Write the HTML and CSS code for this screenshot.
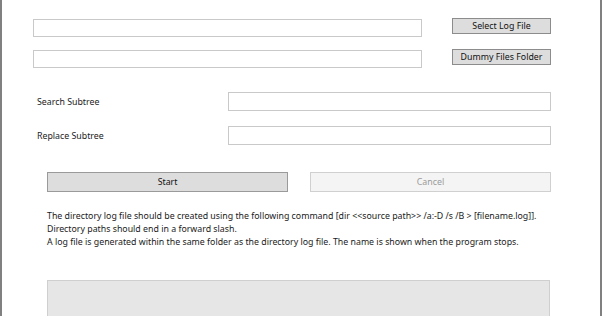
FILE: index.html
```html
<!DOCTYPE html>
<html>
<head>
<meta charset="utf-8">
<link rel="stylesheet" href="styles.css">
</head>
<body>
<div class="window">
  <div class="file-row first">
    <div class="textbox path"></div>
    <div class="btn small">Select Log File</div>
  </div>
  <div class="file-row">
    <div class="textbox path"></div>
    <div class="btn small">Dummy Files Folder</div>
  </div>
  <div class="field-row search">
    <div class="label">Search Subtree</div>
    <div class="textbox field"></div>
  </div>
  <div class="field-row replace">
    <div class="label">Replace Subtree</div>
    <div class="textbox field"></div>
  </div>
  <div class="action-row">
    <div class="btn wide start">Start</div>
    <div class="btn wide disabled">Cancel</div>
  </div>
  <div class="info">
    <div>The directory log file should be created using the following command [dir &lt;&lt;source path&gt;&gt; /a:-D /s /B &gt; [filename.log]].</div>
    <div>Directory paths should end in a forward slash.</div>
    <div>A log file is generated within the same folder as the directory log file. The name is shown when the program stops.</div>
  </div>
  <div class="output"></div>
</div>
</body>
</html>
```

FILE: styles.css
```css
html, body {
  margin: 0;
  padding: 0;
  background: #ffffff;
}
.window {
  width: 598px;
  height: 316px;
  border-left: 2px solid #808080;
  border-right: 2px solid #808080;
  background: #ffffff;
  font-family: "Noto Sans", "Open Sans", sans-serif;
  font-size: 8.8px;
  color: #1a1a1a;
  display: flex;
  flex-direction: column;
  overflow: hidden;
}
.file-row {
  display: flex;
  align-items: flex-start;
  margin-top: 12px;
  padding-left: 31px;
}
.file-row.first {
  margin-top: 18px;
}
.textbox {
  box-sizing: border-box;
  border: 1px solid #c9c9c9;
  background: #ffffff;
}
.textbox.path {
  width: 389px;
  height: 18px;
  margin-top: 1px;
}
.btn {
  box-sizing: border-box;
  display: flex;
  align-items: center;
  justify-content: center;
  background: #dddddd;
  border: 1px solid #8c8c8c;
  color: #111;
}
.btn.small {
  width: 99px;
  height: 16px;
  margin-left: 30px;
}
.field-row {
  display: flex;
  align-items: center;
  padding-left: 35px;
}
.field-row.search {
  margin-top: 24px;
}
.field-row.replace {
  margin-top: 15px;
}
.label {
  width: 191px;
}
.textbox.field {
  width: 323px;
  height: 19px;
}
.action-row {
  display: flex;
  margin-top: 27px;
  padding-left: 45px;
  gap: 22px;
}
.btn.wide {
  width: 241px;
  height: 20px;
}
.btn.start {
  border-color: #9a9a9a;
}
.btn.disabled {
  background: #f4f4f4;
  border-color: #d0d0d0;
  color: #9a9a9a;
}
.info {
  margin-top: 18px;
  padding-left: 45px;
  line-height: 13px;
}
.output {
  margin-top: 31px;
  margin-left: 45px;
  width: 503px;
  flex: 1;
  box-sizing: border-box;
  background: #e6e6e6;
  border: 1px solid #cfcfcf;
  border-bottom: none;
}
```
